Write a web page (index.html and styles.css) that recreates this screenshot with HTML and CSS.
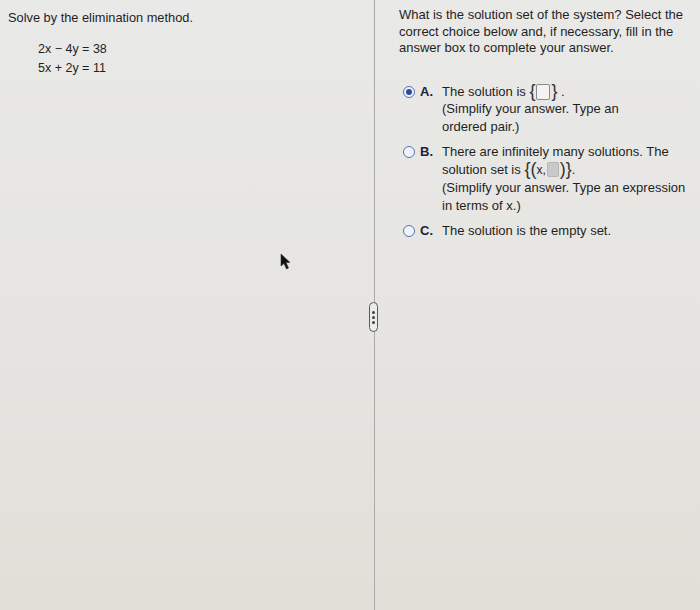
FILE: index.html
```html
<!DOCTYPE html>
<html>
<head>
<meta charset="utf-8">
<link rel="stylesheet" href="styles.css">
</head>
<body>
<div class="page">
  <div class="left">
    <p class="prompt">Solve by the elimination method.</p>
    <div class="eqs">
      <div>2x − 4y = 38</div>
      <div>5x + 2y = 11</div>
    </div>
    <svg class="cursor" width="12" height="17" viewBox="0 0 12 17"><path d="M1 1 L1 13 L4 10.5 L6.5 16 L8.5 15 L6 9.5 L10 9.5 Z" fill="#111" stroke="#333" stroke-width="0.6" stroke-linejoin="round"/></svg>
  </div>
  <div class="right">
    <div class="handle"><span></span><span></span><span></span></div>
    <p class="question">What is the solution set of the system? Select the correct choice below and, if necessary, fill in the answer box to complete your answer.</p>
    <div class="options">
      <div class="opt">
        <span class="radio on"></span>
        <span class="letter">A.</span>
        <div class="body">
          <div>The solution is <span class="br">{</span><span class="box big"></span><span class="br">}</span> .</div>
          <div>(Simplify your answer. Type an</div>
          <div>ordered pair.)</div>
        </div>
      </div>
      <div class="opt">
        <span class="radio"></span>
        <span class="letter">B.</span>
        <div class="body">
          <div>There are infinitely many solutions. The</div>
          <div>solution set is <span class="br">{(</span><span class="sm">x,</span><span class="box fill"></span><span class="br">)}</span>.</div>
          <div>(Simplify your answer. Type an expression</div>
          <div>in terms of x.)</div>
        </div>
      </div>
      <div class="opt">
        <span class="radio"></span>
        <span class="letter">C.</span>
        <div class="body">
          <div>The solution is the empty set.</div>
        </div>
      </div>
    </div>
  </div>
</div>
</body>
</html>
```

FILE: styles.css
```css
html, body {
  margin: 0;
  padding: 0;
}
body {
  width: 700px;
  height: 610px;
  overflow: hidden;
  font-family: "Liberation Sans", Arial, sans-serif;
  font-size: 13px;
  color: #1f1f1f;
  background: linear-gradient(180deg, #e9e9e7 0%, #e6e5e2 50%, #e2dfd8 100%);
}
.page {
  display: flex;
  height: 610px;
}
.left {
  position: relative;
  width: 374px;
  flex: none;
  padding: 10px 0 0 8px;
  box-sizing: border-box;
}
.prompt {
  margin: 0;
  line-height: 16px;
  font-size: 12.8px;
}
.eqs {
  margin: 14px 0 0 30px;
  line-height: 19px;
  font-size: 12.5px;
}
.cursor {
  position: absolute;
  left: 280px;
  top: 253px;
}
.right {
  position: relative;
  flex: 1;
  border-left: 1px solid #a9a9a7;
  padding: 7px 0 0 24px;
}
.handle {
  position: absolute;
  left: -6px;
  top: 302px;
  width: 9px;
  height: 30px;
  box-sizing: border-box;
  border: 1.5px solid #5a5a5a;
  border-radius: 5px;
  background: #ececea;
  display: flex;
  flex-direction: column;
  align-items: center;
  justify-content: center;
  gap: 2px;
}
.handle span {
  width: 3px;
  height: 3px;
  border-radius: 50%;
  background: #444;
}
.question {
  margin: 0;
  width: 290px;
  line-height: 16.5px;
}
.options {
  margin-top: 26px;
  display: flex;
  flex-direction: column;
  gap: 8px;
}
.opt {
  display: flex;
  align-items: flex-start;
  line-height: 17.5px;
}
.radio {
  flex: none;
  width: 12px;
  height: 12px;
  box-sizing: border-box;
  border: 1.5px solid #4f74bf;
  border-radius: 50%;
  margin: 3px 0 0 4px;
  display: flex;
  align-items: center;
  justify-content: center;
  background: #f2f3f6;
}
.radio.on::after {
  content: "";
  width: 6px;
  height: 6px;
  border-radius: 50%;
  background: #2b4a9c;
}
.letter {
  width: 22px;
  margin-left: 5px;
  font-weight: bold;
  color: #1c2340;
}
.body {
  flex: 1;
}
.br {
  font-size: 18px;
  line-height: 14px;
  vertical-align: -1px;
  color: #333;
}
.sm {
  font-size: 12px;
}
.box {
  display: inline-block;
  width: 12px;
  height: 15px;
  box-sizing: border-box;
  border: 1px solid #8a8a8a;
  border-radius: 2px;
  background: #f3f3f1;
  vertical-align: -3px;
  margin: 0 1px;
}
.box.big {
  width: 14px;
  height: 16px;
  vertical-align: -4px;
}
.box.fill {
  background: #c9c9c9;
  border-color: #b5b5b5;
}
```
